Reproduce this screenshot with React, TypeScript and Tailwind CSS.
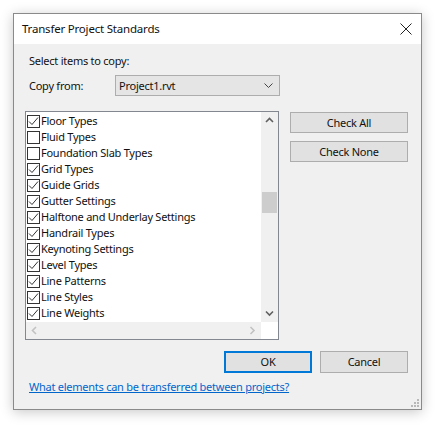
import React from 'react';

const items: [string, boolean][] = [
  ['Floor Types', true],
  ['Fluid Types', false],
  ['Foundation Slab Types', false],
  ['Grid Types', true],
  ['Guide Grids', true],
  ['Gutter Settings', true],
  ['Halftone and Underlay Settings', true],
  ['Handrail Types', true],
  ['Keynoting Settings', true],
  ['Level Types', true],
  ['Line Patterns', true],
  ['Line Styles', true],
  ['Line Weights', true],
];

function Check({ on }: { on: boolean }) {
  return (
    <div className="w-[13px] h-[13px] border border-[#333] bg-white shrink-0 flex items-center justify-center">
      {on && (
        <svg width="11" height="11" viewBox="0 0 11 11">
          <path d="M1 5.5 L4 8.5 L10 1.5" fill="none" stroke="#333" strokeWidth="1" />
        </svg>
      )}
    </div>
  );
}

function Arrow({ dir, color }: { dir: 'up' | 'down' | 'left' | 'right'; color: string }) {
  const d = {
    up: 'M1 5 L4.5 1.5 L8 5',
    down: 'M1 1.5 L4.5 5 L8 1.5',
    left: 'M5 1 L1.5 4.5 L5 8',
    right: 'M1.5 1 L5 4.5 L1.5 8',
  }[dir];
  const vert = dir === 'up' || dir === 'down';
  return (
    <svg width={vert ? 9 : 7} height={vert ? 7 : 9} viewBox={vert ? '0 0 9 7' : '0 0 7 9'}>
      <path d={d} fill="none" stroke={color} strokeWidth="1.6" />
    </svg>
  );
}

export default function App() {
  return (
    <div
      className="w-[437px] h-[426px] bg-white pt-[13px] pl-[13px] text-[11px] tracking-[-0.25px] text-[#111]"
      style={{ fontFamily: '"Noto Sans", "Open Sans", sans-serif' }}
    >
      <div className="w-[409px] h-[397px] border border-[#8a8a8a] bg-[#f0f0f0] shadow-[0_2px_12px_rgba(0,0,0,0.22)] flex flex-col">
        {/* Title bar */}
        <div className="h-[30px] bg-white flex items-center justify-between pl-[8px] pr-[9px]">
          <span className="leading-4 text-[11.5px] tracking-[-0.2px]">Transfer Project Standards</span>
          <svg width="12" height="12" viewBox="0 0 12 12">
            <path d="M0.5 0.5 L11.5 11.5 M11.5 0.5 L0.5 11.5" stroke="#222" strokeWidth="1" />
          </svg>
        </div>

        {/* Body */}
        <div className="flex-1 flex flex-col pl-[11px] pr-[13px] relative">
          <div className="mt-[9px] pl-[4px] leading-4">Select items to copy:</div>

          <div className="mt-[6px] flex items-center">
            <span className="w-[90px] pl-[4px] leading-4">Copy from:</span>
            <div className="w-[165px] h-[21px] border border-[#adadad] bg-[#e5e5e5] flex items-center justify-between pl-[3px] pr-[6px]">
              <span className="leading-4">Project1.rvt</span>
              <svg width="9" height="6" viewBox="0 0 9 6">
                <path d="M0.5 0.5 L4.5 4.5 L8.5 0.5" fill="none" stroke="#444" strokeWidth="1" />
              </svg>
            </div>
          </div>

          <div className="mt-[15px] flex gap-[11px]">
            {/* List box */}
            <div className="w-[254px] h-[229px] border border-[#828790] bg-white flex flex-col">
              <div className="flex h-[210px]">
                <div className="flex-1 pt-[1px] pl-[1px]">
                  {items.map(([label, on]) => (
                    <div key={label} className="h-[16px] flex items-center gap-[1px]">
                      <Check on={on} />
                      <span className="leading-4 whitespace-nowrap">{label}</span>
                    </div>
                  ))}
                </div>
                <div className="w-[17px] bg-[#f0f0f0] flex flex-col">
                  <div className="h-[17px] flex items-center justify-center">
                    <Arrow dir="up" color="#606060" />
                  </div>
                  <div className="flex-1 flex flex-col items-center">
                    <div className="mt-[63px] w-[15px] h-[21px] bg-[#cdcdcd]" />
                  </div>
                  <div className="h-[17px] flex items-center justify-center">
                    <Arrow dir="down" color="#606060" />
                  </div>
                </div>
              </div>
              <div className="flex flex-1">
                <div className="flex-1 bg-[#f0f0f0] flex items-center justify-between">
                  <div className="w-[17px] flex justify-center">
                    <Arrow dir="left" color="#c2c2c2" />
                  </div>
                  <div className="w-[17px] flex justify-center">
                    <Arrow dir="right" color="#c2c2c2" />
                  </div>
                </div>
                <div className="w-[17px] bg-white" />
              </div>
            </div>

            {/* Side buttons */}
            <div className="flex-1 flex flex-col gap-[8px] pt-[1px]">
              <button className="h-[21px] border border-[#adadad] bg-[#e1e1e1] leading-4">Check All</button>
              <button className="h-[21px] border border-[#adadad] bg-[#e1e1e1] leading-4">Check None</button>
            </div>
          </div>

          <div className="mt-[11px] flex justify-end gap-[8px]">
            <button className="w-[88px] h-[22px] border-2 border-[#0078d7] bg-[#e1e1e1] leading-4">OK</button>
            <button className="w-[88px] h-[22px] border border-[#adadad] bg-[#e1e1e1] leading-4">Cancel</button>
          </div>

          <div className="mt-[6px] pl-[4px] leading-4">
            <a className="text-[#0066cc] underline">What elements can be transferred between projects?</a>
          </div>

          <svg className="absolute right-[2px] bottom-[2px]" width="8" height="8" viewBox="0 0 8 8">
            <rect x="6" y="0" width="2" height="2" fill="#b8b8b8" />
            <rect x="3" y="3" width="2" height="2" fill="#b8b8b8" />
            <rect x="6" y="3" width="2" height="2" fill="#b8b8b8" />
            <rect x="0" y="6" width="2" height="2" fill="#b8b8b8" />
            <rect x="3" y="6" width="2" height="2" fill="#b8b8b8" />
            <rect x="6" y="6" width="2" height="2" fill="#b8b8b8" />
          </svg>
        </div>
      </div>
    </div>
  );
}
